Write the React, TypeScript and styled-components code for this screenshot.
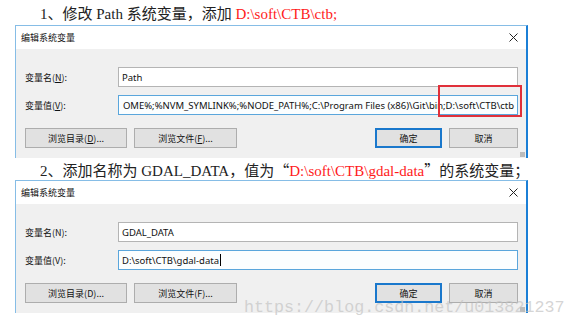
import React from "react";
import styled, { createGlobalStyle } from "styled-components";

const GlobalStyle = createGlobalStyle`
  html, body {
    margin: 0;
    padding: 0;
    background: #ffffff;
  }
  body {
    width: 580px;
    height: 331px;
    overflow: hidden;
  }
`;

const Page = styled.div`
  position: relative;
  width: 580px;
  height: 331px;
  display: flex;
  flex-direction: column;
`;

const Heading = styled.div<{ $h: number; $pt: number }>`
  height: ${(p) => p.$h}px;
  padding: ${(p) => p.$pt}px 0 0 40px;
  box-sizing: border-box;
  font-family: "Liberation Serif", "Noto Sans CJK SC", serif;
  font-size: 15px;
  line-height: 16px;
  color: #222;
  white-space: nowrap;
`;

const Red = styled.span`
  color: #ff1a1a;
`;

const Quote = styled.span`
  font-family: "Noto Sans CJK SC", sans-serif;
`;

const Dialog = styled.div`
  margin-left: 15px;
  width: 513px;
  box-sizing: border-box;
  border-left: 1px solid #86bde6;
  border-top: 1px solid #86bde6;
  border-right: 2px solid #1b7fd6;
  display: flex;
  flex-direction: column;
  font-family: "Noto Sans CJK SC", "Noto Sans", sans-serif;
  font-size: 9px;
  color: #111;
`;

const TitleBar = styled.div`
  height: 23px;
  background: #ffffff;
  display: flex;
  align-items: center;
  justify-content: space-between;
  padding: 0 8px 0 5px;
`;

const CloseX = styled.svg`
  width: 9px;
  height: 9px;
`;

const Body = styled.div`
  position: relative;
  height: 109px;
  background: #f0f0f0;
  box-sizing: border-box;
  padding: 18px 8px 0 9px;
  display: flex;
  flex-direction: column;
`;

const Row = styled.div<{ $mb: number }>`
  display: flex;
  align-items: center;
  height: 20px;
  margin-bottom: ${(p) => p.$mb}px;
`;

const Label = styled.div`
  width: 93px;
  flex: none;
  u {
    text-decoration: underline;
  }
`;

const Input = styled.div<{ $focus?: boolean; $end?: boolean }>`
  flex: 1;
  height: 20px;
  box-sizing: border-box;
  border: 1px solid ${(p) => (p.$focus ? "#5aa6dc" : "#b4b4b4")};
  background: ${(p) => (p.$focus ? "#fbfeff" : "#ffffff")};
  display: flex;
  align-items: center;
  justify-content: ${(p) => (p.$end ? "flex-end" : "flex-start")};
  padding: 0 3px;
  overflow: hidden;
  white-space: nowrap;
  font-family: "Noto Sans", "Noto Sans CJK SC", sans-serif;
  font-size: 9.5px;
`;

const Caret = styled.span`
  display: inline-block;
  width: 1px;
  height: 12px;
  background: #000;
  margin-left: 1px;
`;

const Buttons = styled.div`
  display: flex;
  align-items: center;
  margin-top: 5px;
  height: 20px;
`;

const Button = styled.div<{ $w: number; $primary?: boolean }>`
  width: ${(p) => p.$w}px;
  height: 20px;
  box-sizing: border-box;
  background: #e1e1e1;
  border: ${(p) => (p.$primary ? "2px solid #1a78cc" : "1px solid #adadad")};
  display: flex;
  align-items: center;
  justify-content: center;
  margin-right: 7px;
  &:last-child {
    margin-right: 0;
  }
  u {
    text-decoration: underline;
  }
`;

const Spacer = styled.div`
  flex: 1;
`;

const HighlightBox = styled.div`
  position: absolute;
  left: 422px;
  top: 36px;
  width: 80px;
  height: 28px;
  border: 2px solid #e0303a;
`;

const Grip = styled.div`
  position: absolute;
  right: 1px;
  bottom: 1px;
  width: 5px;
  height: 5px;
  background-image: radial-gradient(#b8b8b8 0.7px, transparent 0.8px);
  background-size: 2px 2px;
`;

const Watermark = styled.div`
  position: absolute;
  left: 244px;
  top: 298px;
  font-family: "Liberation Mono", monospace;
  font-size: 16.7px;
  color: rgba(195, 195, 195, 0.7);
  white-space: nowrap;
  pointer-events: none;
`;

function Close() {
  return (
    <CloseX viewBox="0 0 9 9">
      <path d="M0.5 0.5 L8.5 8.5 M8.5 0.5 L0.5 8.5" stroke="#222" strokeWidth="1" />
    </CloseX>
  );
}

type DialogProps = {
  name: string;
  value: React.ReactNode;
  underline: boolean;
  highlight?: boolean;
  scrolled?: boolean;
};

function EnvDialog({ name, value, underline, highlight, scrolled }: DialogProps) {
  const key = (k: string) => (underline ? <u>{k}</u> : k);
  return (
    <Dialog>
      <TitleBar>
        <span>编辑系统变量</span>
        <Close />
      </TitleBar>
      <Body>
        <Row $mb={8}>
          <Label>变量名({key("N")}):</Label>
          <Input>{name}</Input>
        </Row>
        <Row $mb={8}>
          <Label>变量值({key("V")}):</Label>
          <Input $focus $end={scrolled}>
            {value}
          </Input>
        </Row>
        <Buttons>
          <Button $w={102}>浏览目录({key("D")})...</Button>
          <Button $w={103}>浏览文件({key("F")})...</Button>
          <Spacer />
          <Button $w={67} $primary>
            确定
          </Button>
          <Button $w={69}>取消</Button>
        </Buttons>
        {highlight && <HighlightBox />}
        <Grip />
      </Body>
    </Dialog>
  );
}

export default function App() {
  return (
    <>
      <GlobalStyle />
      <Page>
        <Heading $h={25} $pt={6}>
          1、修改 Path 系统变量，添加 <Red>D:\soft\CTB\ctb;</Red>
        </Heading>
        <EnvDialog
          name="Path"
          value="OME%;%NVM_SYMLINK%;%NODE_PATH%;C:\Program Files (x86)\Git\bin;D:\soft\CTB\ctb"
          underline
          highlight
          scrolled
        />
        <Heading $h={22} $pt={4}>
          2、添加名称为 GDAL_DATA，值为<Quote>“</Quote>
          <Red>D:\soft\CTB\gdal-data</Red>
          <Quote>”</Quote>的系统变量；
        </Heading>
        <EnvDialog
          name="GDAL_DATA"
          value={
            <>
              D:\soft\CTB\gdal-data
              <Caret />
            </>
          }
          underline={false}
        />
        <Watermark>https://blog.csdn.net/u013821237</Watermark>
      </Page>
    </>
  );
}
